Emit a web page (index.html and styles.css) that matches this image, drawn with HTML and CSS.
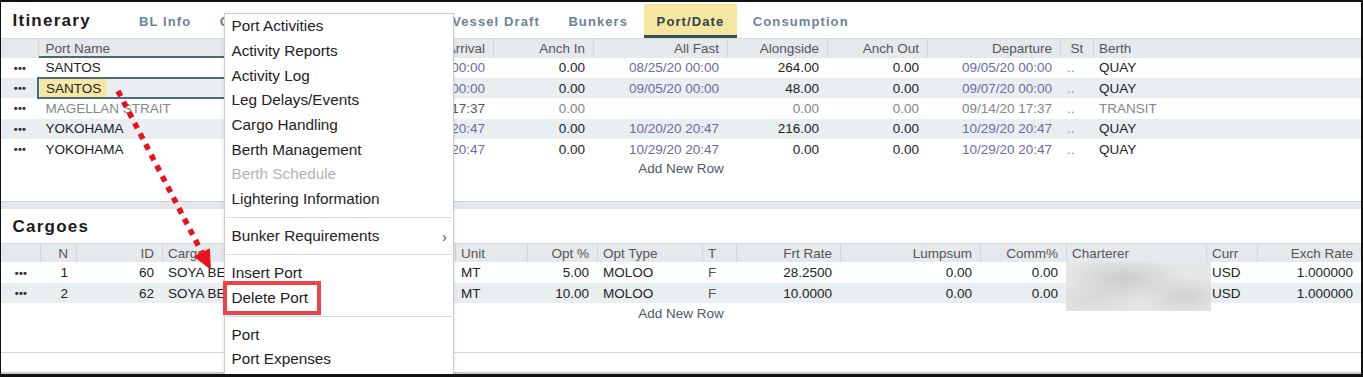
FILE: index.html
```html
<!DOCTYPE html>
<html>
<head>
<meta charset="utf-8">
<link rel="stylesheet" href="styles.css">
</head>
<body>
<div class="frame">
  <section class="itin">
    <div class="panel-head">
      <h2 class="title">Itinerary</h2>
      <nav class="tabs">
        <span class="tab">BL Info</span>
        <span class="tab tab-a">C</span>
        <span class="tab tab-b"></span>
        <span class="tab">Vessel Draft</span>
        <span class="tab">Bunkers</span>
        <span class="tab active">Port/Date</span>
        <span class="tab">Consumption</span>
      </nav>
    </div>
    <div class="grid itin-grid">
      <div class="row hrow">
        <div class="c dots"></div>
        <div class="c pname sorted">Port Name</div>
        <div class="c"></div>
        <div class="c r">Arrival</div>
        <div class="c r">Anch In</div>
        <div class="c r">All Fast</div>
        <div class="c r">Alongside</div>
        <div class="c r">Anch Out</div>
        <div class="c r">Departure</div>
        <div class="c ctr">St</div>
        <div class="c">Berth</div>
      </div>
      <div class="row">
        <div class="c dots">&bull;&bull;&bull;</div>
        <div class="c pname">SANTOS</div>
        <div class="c"></div>
        <div class="c r date">00:00</div>
        <div class="c r">0.00</div>
        <div class="c r date">08/25/20 00:00</div>
        <div class="c r">264.00</div>
        <div class="c r">0.00</div>
        <div class="c r date">09/05/20 00:00</div>
        <div class="c st">..</div>
        <div class="c">QUAY</div>
      </div>
      <div class="row alt">
        <div class="c dots">&bull;&bull;&bull;</div>
        <div class="c pname selected"><span class="hl">SANTOS</span></div>
        <div class="c"></div>
        <div class="c r date">00:00</div>
        <div class="c r">0.00</div>
        <div class="c r date">09/05/20 00:00</div>
        <div class="c r">48.00</div>
        <div class="c r">0.00</div>
        <div class="c r date">09/07/20 00:00</div>
        <div class="c st">..</div>
        <div class="c">QUAY</div>
      </div>
      <div class="row muted">
        <div class="c dots">&bull;&bull;&bull;</div>
        <div class="c pname">MAGELLAN STRAIT</div>
        <div class="c"></div>
        <div class="c r dark">17:37</div>
        <div class="c r">0.00</div>
        <div class="c r"></div>
        <div class="c r">0.00</div>
        <div class="c r">0.00</div>
        <div class="c r">09/14/20 17:37</div>
        <div class="c st">..</div>
        <div class="c">TRANSIT</div>
      </div>
      <div class="row alt">
        <div class="c dots">&bull;&bull;&bull;</div>
        <div class="c pname">YOKOHAMA</div>
        <div class="c"></div>
        <div class="c r date">20:47</div>
        <div class="c r">0.00</div>
        <div class="c r date">10/20/20 20:47</div>
        <div class="c r">216.00</div>
        <div class="c r">0.00</div>
        <div class="c r date">10/29/20 20:47</div>
        <div class="c st">..</div>
        <div class="c">QUAY</div>
      </div>
      <div class="row">
        <div class="c dots">&bull;&bull;&bull;</div>
        <div class="c pname">YOKOHAMA</div>
        <div class="c"></div>
        <div class="c r date">20:47</div>
        <div class="c r">0.00</div>
        <div class="c r date">10/29/20 20:47</div>
        <div class="c r">0.00</div>
        <div class="c r">0.00</div>
        <div class="c r date">10/29/20 20:47</div>
        <div class="c st">..</div>
        <div class="c">QUAY</div>
      </div>
      <div class="add-row">Add New Row</div>
    </div>
  </section>

  <div class="splitter"></div>

  <section class="cargo">
    <div class="panel-head cargo-head">
      <h2 class="title">Cargoes</h2>
    </div>
    <div class="row hrow cargo-row">
      <div class="c dots"></div>
      <div class="c r">N</div>
      <div class="c r">ID</div>
      <div class="c cut">Cargo</div>
      <div class="c r"></div>
      <div class="c">Unit</div>
      <div class="c r">Opt %</div>
      <div class="c">Opt Type</div>
      <div class="c">T</div>
      <div class="c r">Frt Rate</div>
      <div class="c r">Lumpsum</div>
      <div class="c r">Comm%</div>
      <div class="c">Charterer</div>
      <div class="c">Curr</div>
      <div class="c r">Exch Rate</div>
    </div>
    <div class="cargo-body">
      <div class="row cargo-row">
        <div class="c dots">&bull;&bull;&bull;</div>
        <div class="c r">1</div>
        <div class="c r">60</div>
        <div class="c cut">SOYA BE</div>
        <div class="c r"></div>
        <div class="c">MT</div>
        <div class="c r">5.00</div>
        <div class="c">MOLOO</div>
        <div class="c soft">F</div>
        <div class="c r">28.2500</div>
        <div class="c r">0.00</div>
        <div class="c r">0.00</div>
        <div class="c"></div>
        <div class="c">USD</div>
        <div class="c r">1.000000</div>
      </div>
      <div class="row cargo-row alt">
        <div class="c dots">&bull;&bull;&bull;</div>
        <div class="c r">2</div>
        <div class="c r">62</div>
        <div class="c cut">SOYA BE</div>
        <div class="c r"></div>
        <div class="c">MT</div>
        <div class="c r">10.00</div>
        <div class="c">MOLOO</div>
        <div class="c soft">F</div>
        <div class="c r">10.0000</div>
        <div class="c r">0.00</div>
        <div class="c r">0.00</div>
        <div class="c"></div>
        <div class="c">USD</div>
        <div class="c r">1.000000</div>
      </div>
      <div class="add-row">Add New Row</div>
    </div>
    <div class="footer-strip"></div>
  </section>

  <div class="redact"></div>

  <svg class="arrow" width="1360" height="372" viewBox="0 0 1360 372">
    <line x1="117" y1="89" x2="200.8" y2="250.3" stroke="#e8121c" stroke-width="5.5" stroke-dasharray="6 6"/>
    <polygon points="210,268 208.8,246.2 192.8,254.4" fill="#e8121c"/>
  </svg>

  <div class="ctx-menu">
    <div class="mi">Port Activities</div>
    <div class="mi">Activity Reports</div>
    <div class="mi">Activity Log</div>
    <div class="mi">Leg Delays/Events</div>
    <div class="mi">Cargo Handling</div>
    <div class="mi">Berth Management</div>
    <div class="mi disabled">Berth Schedule</div>
    <div class="mi">Lightering Information</div>
    <div class="sep"></div>
    <div class="mi has-sub">Bunker Requirements<span class="chev">&rsaquo;</span></div>
    <div class="sep"></div>
    <div class="mi">Insert Port</div>
    <div class="mi">Delete Port</div>
    <div class="sep"></div>
    <div class="mi">Port</div>
    <div class="mi">Port Expenses</div>
  </div>

  <div class="callout"></div>
</div>
</body>
</html>
```

FILE: styles.css
```css
html, body {
  margin: 0;
  padding: 0;
  background: #ffffff;
}

body {
  font-family: "Liberation Sans", Arial, sans-serif;
  color: #222;
  overflow: hidden;
}

.frame {
  position: relative;
  width: 1363px;
  height: 377px;
  box-sizing: border-box;
  border-style: solid;
  border-color: #111;
  border-width: 2px 2px 3px 1px;
  overflow: hidden;
  background: #fff;
}

/* ---------- panel headers ---------- */
.itin {
  height: 199px;
}

.panel-head {
  display: flex;
  align-items: flex-end;
  height: 36px;
}

.title {
  margin: 0;
  width: 125px;
  box-sizing: border-box;
  padding-left: 11.5px;
  align-self: center;
  padding-top: 2px;
  font-size: 17px;
  font-weight: bold;
  letter-spacing: 1.25px;
  color: #1b1b1b;
}

.tabs {
  display: flex;
  gap: 2.5px;
}

.tab {
  display: flex;
  align-items: center;
  height: 34px;
  box-sizing: border-box;
  padding: 4px 13px 0;
  border-bottom: 3px solid transparent;
  font-size: 13px;
  font-weight: bold;
  letter-spacing: 1.1px;
  color: #6a8494;
  white-space: nowrap;
  overflow: hidden;
}

.tab-a { width: 115px; }
.tab-b { width: 112.5px; }

.tab.active {
  background: #f6e6a1;
  border-bottom-color: #2f5052;
  color: #2d4446;
}

/* ---------- grid rows ---------- */
.row {
  display: grid;
  height: 20.4px;
  font-size: 13.5px;
}

.itin-grid .row {
  grid-template-columns: 37px 212px 110px 133px 100px 134px 100px 100px 133px 33px 1fr;
}

.cargo-row {
  grid-template-columns: 39px 36px 86px 178px 115px 72px 70px 105px 34px 104px 140px 86px 140px 51px 1fr;
}

.hrow {
  height: 19.5px;
  background: #e6e9ec;
  box-sizing: border-box;
  border-top: 1px solid #d6dbdf;
  color: #555;
}

.row.alt {
  background: #e9eef1;
}

.c {
  display: flex;
  align-items: center;
  min-width: 0;
  padding: 0 8px 0 5px;
  border-left: 1px solid transparent;
  white-space: nowrap;
  overflow: hidden;
}

.hrow .c {
  border-left-color: #d2d7db;
}

.hrow .c.dots {
  border-left-color: transparent;
}

.c.r { justify-content: flex-end; }
.c.ctr { justify-content: center; padding: 0; }

.c.dots {
  justify-content: center;
  padding: 0;
  font-size: 11px;
  font-weight: bold;
  letter-spacing: 0.3px;
  color: #333;
}

.c.pname { padding-left: 6.5px; }

.hrow .c.sorted {
  box-shadow: inset 0 -2px 0 #4b6970;
}

.c.selected {
  padding: 0;
  overflow: visible;
  outline: 2px solid #4d6b72;
  outline-offset: -1px;
}

.hl {
  display: flex;
  align-items: center;
  height: 100%;
  margin-left: 1px;
  padding: 0 6px;
  background: #f6e7a5;
}

.date { color: #6a6ba7; }
.c.st { color: #888; padding-left: 6px; }
.soft { color: #555; }

.row.muted { color: #858585; }
.row.muted .dots { color: #333; }
.row.muted .dark { color: #555; }

.add-row {
  height: 20.5px;
  line-height: 20.5px;
  text-align: center;
  font-size: 13.5px;
  color: #4b5864;
}

/* ---------- splitter ---------- */
.splitter {
  height: 8px;
  box-sizing: border-box;
  border-top: 1px solid #cfd3d7;
  background: #e5e8eb;
}

/* ---------- cargoes ---------- */
.cargo {
  height: 165px;
}

.cargo-head {
  height: 34px;
}

.cargo .hrow {
  height: 19.3px;
}

.cargo-body {
  height: 89.7px;
}

.cargo-body .row {
  height: 20.5px;
}

.cargo-body .add-row {
  height: 21px;
  line-height: 21px;
}

.footer-strip {
  height: 19px;
  border-top: 1px solid #d6d6d6;
  border-bottom: 3px solid #c9cdd1;
}

/* ---------- redacted charterer ---------- */
.redact {
  position: absolute;
  left: 1065px;
  top: 260px;
  width: 145px;
  height: 49px;
  background:
    radial-gradient(ellipse 60px 22px at 40% 35%, #cbcbcb, rgba(210,210,210,0)),
    radial-gradient(ellipse 45px 20px at 82% 70%, #d0d0d0, rgba(210,210,210,0)),
    radial-gradient(ellipse 50px 18px at 18% 75%, #d8d8d8, rgba(215,215,215,0)),
    #e6e6e6;
}

/* ---------- arrow annotation ---------- */
.arrow {
  position: absolute;
  left: 0;
  top: 0;
  pointer-events: none;
}

/* ---------- context menu ---------- */
.ctx-menu {
  position: absolute;
  left: 223px;
  top: 11px;
  width: 230px;
  height: 400px;
  box-sizing: border-box;
  background: #fff;
  border: 1px solid #cbcbcb;
  box-shadow: 0 1px 4px rgba(0, 0, 0, 0.12);
}

.mi {
  display: flex;
  align-items: center;
  height: 24.7px;
  padding: 0 6px 0 6.5px;
  font-size: 15.3px;
  color: #222;
  white-space: nowrap;
}

.mi.disabled { color: #b3b3b3; }

.chev {
  margin-left: auto;
  font-size: 15px;
  color: #555;
}

.sep {
  height: 1px;
  margin: 5.7px 1px 5.6px;
  background: #d9d9d9;
}

.callout {
  position: absolute;
  left: 222px;
  top: 279px;
  width: 98px;
  height: 34px;
  box-sizing: border-box;
  border: 4px solid #e9434b;
}
```
